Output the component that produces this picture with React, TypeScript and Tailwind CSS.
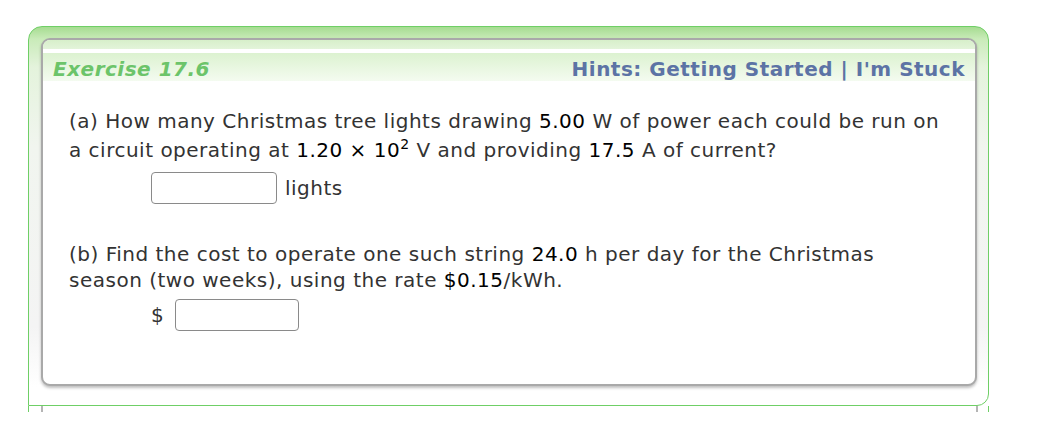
import React from "react";

export default function App() {
  const font = { fontFamily: '"DejaVu Sans", Verdana, sans-serif' };
  return (
    <div className="w-[1050px] h-[432px] bg-white overflow-hidden" style={font}>
      <div className="pt-[26px] pl-[28px]">
        <div className="w-[961px] rounded-tl-[14px] rounded-tr-[14px] rounded-br-[12px] border border-[#6fcf66] bg-[linear-gradient(to_bottom,#a6dc91_0px,#c9ebb9_12px,#e4f3dc_40px,#f1f5ef_120px,#f4f4f4_300px,#ffffff_360px)] pl-[12px] pr-[11px] pt-[11px] pb-[19px]">
          <div className="rounded-[9px] border-2 border-[#a9a9a9] bg-white shadow-[0_2px_3px_rgba(0,0,0,0.25)] overflow-hidden">
            <div className="h-[9px] bg-[linear-gradient(to_bottom,#d7efca,#e3f4da)]" />
            <div className="h-[4px] bg-white" />
            <div className="h-[28px] flex items-center justify-between pl-[10px] pr-[10px] pt-[3px] bg-[linear-gradient(to_bottom,#dcf2d0,#f4fbf0)] tracking-[0.5px]">
              <span className="text-[20px] font-bold italic text-[#6cc46a]">Exercise 17.6</span>
              <span className="text-[20px] font-bold text-[#5c73a5]">Hints: Getting Started | I'm Stuck</span>
            </div>
            <div className="pl-[26px] pr-[32px] pt-[26px] pb-[53px] text-[20px] leading-[26px] tracking-[0.5px] text-[#333333]">
              <p className="leading-[29px]">
                (a) How many Christmas tree lights drawing <span className="text-black">5.00</span> W of power each could be run on a circuit operating at <span className="text-black">1.20 × 10<sup className="relative top-[-8px] align-baseline text-[14px] leading-none">2</sup></span> V and providing <span className="text-black">17.5</span> A of current?
              </p>
              <div className="flex items-center mt-[7px] ml-[82px] h-[32px]">
                <div className="w-[126px] h-[32px] rounded-[4px] border border-[#8a8a8a] bg-white" />
                <span className="ml-[8px]">lights</span>
              </div>
              <p className="mt-[37px]">
                (b) Find the cost to operate one such string <span className="text-black">24.0</span> h per day for the Christmas season (two weeks), using the rate <span className="text-black">$0.15</span>/kWh.
              </p>
              <div className="flex items-center mt-[6px] ml-[82px] h-[32px]">
                <span className="mr-[11px]">$</span>
                <div className="w-[124px] h-[32px] rounded-[4px] border border-[#8a8a8a] bg-white" />
              </div>
            </div>
          </div>
        </div>
        <div className="w-[961px] h-[6px] flex">
          <div className="w-[1px] bg-[#6fcf66]" />
          <div className="w-[12px]" />
          <div className="w-[2px] bg-[#b5b5b5]" />
          <div className="flex-1" />
          <div className="w-[2px] bg-[#b5b5b5]" />
          <div className="w-[10px]" />
          <div className="w-[1px] bg-[#6fcf66]" />
        </div>
      </div>
    </div>
  );
}
